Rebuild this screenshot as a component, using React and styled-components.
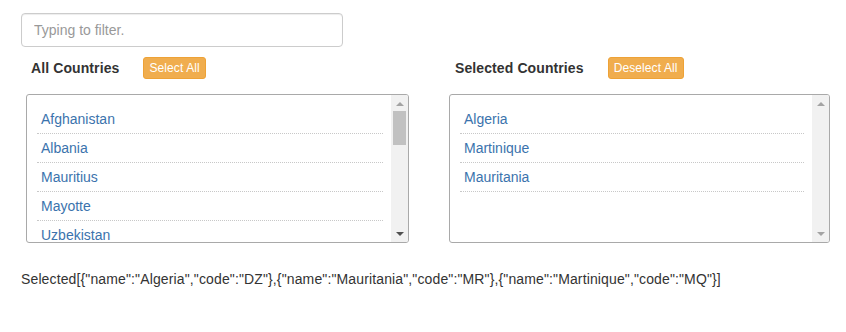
import React from "react";
import styled, { createGlobalStyle } from "styled-components";

const GlobalStyle = createGlobalStyle`
  html, body { margin: 0; padding: 0; background: #fff; }
  body {
    font-family: "Liberation Sans", Arial, Helvetica, sans-serif;
    font-size: 14px;
    line-height: 20px;
    color: #333;
  }
  * { box-sizing: border-box; }
`;

const Page = styled.div`
  padding-top: 13px;
`;

const FilterInput = styled.input`
  display: block;
  margin-left: 21px;
  width: 322px;
  height: 34px;
  padding: 6px 12px;
  font-family: inherit;
  font-size: 14px;
  line-height: 20px;
  color: #555;
  background: #fff;
  border: 1px solid #ccc;
  border-radius: 4px;
  box-shadow: inset 0 1px 1px rgba(0, 0, 0, 0.075);
  outline: none;
  &::placeholder { color: #999; }
`;

const Columns = styled.div`
  display: grid;
  grid-template-columns: 423px 423px;
  margin-top: 10px;
`;

const Column = styled.div`
  display: flex;
  flex-direction: column;
  padding-left: 26px;
`;

const Header = styled.div`
  display: flex;
  align-items: center;
  gap: 24px;
  height: 22px;
  padding-left: ${(p) => p.$indent}px;
`;

const Title = styled.span`
  font-weight: bold;
  font-size: 14px;
  line-height: 20px;
  letter-spacing: 0.1px;
  color: #333;
`;

const WarnButton = styled.button`
  font-family: inherit;
  font-size: 12px;
  line-height: 18px;
  letter-spacing: 0.1px;
  padding: 1px 5px;
  color: #fff;
  background: #f0ad4e;
  border: 1px solid #eea236;
  border-radius: 3px;
  cursor: pointer;
`;

const Box = styled.div`
  display: flex;
  margin-top: 15px;
  width: ${(p) => p.$w}px;
  height: 149px;
  border: 1px solid #a9a9a9;
  border-radius: 3px;
  overflow: hidden;
  background: #fff;
`;

const List = styled.ul`
  flex: 1;
  list-style: none;
  margin: 0;
  padding: 10px 8px 0 10px;
  overflow: hidden;
`;

const Item = styled.li`
  padding: 4px;
  line-height: 20px;
  color: #3b73ad;
  border-bottom: 1px dotted #c8c8c8;
  cursor: pointer;
`;

const Scrollbar = styled.div`
  display: flex;
  flex-direction: column;
  width: 17px;
  background: #f1f1f1;
`;

const Arrow = styled.div`
  display: flex;
  align-items: center;
  justify-content: center;
  height: 17px;
  &::before {
    content: "";
    width: 0;
    height: 0;
    border-left: 4px solid transparent;
    border-right: 4px solid transparent;
    ${(p) =>
      p.$dir === "up"
        ? `border-bottom: 4px solid ${p.$active ? "#505050" : "#a3a3a3"};`
        : `border-top: 4px solid ${p.$active ? "#505050" : "#a3a3a3"};`}
  }
`;

const Track = styled.div`
  flex: 1;
  display: flex;
  flex-direction: column;
  padding: 0 2px;
`;

const Thumb = styled.div`
  height: 34px;
  margin-top: ${(p) => p.$offset}px;
  background: #c1c1c1;
`;

const Result = styled.div`
  margin-top: 26px;
  padding-left: 21px;
  line-height: 20px;
  letter-spacing: 0.13px;
  color: #333;
`;

const allCountries = [
  "Afghanistan",
  "Albania",
  "Mauritius",
  "Mayotte",
  "Uzbekistan",
];

const selected = [
  { name: "Algeria", code: "DZ" },
  { name: "Martinique", code: "MQ" },
  { name: "Mauritania", code: "MR" },
];

const resultOrder = [
  { name: "Algeria", code: "DZ" },
  { name: "Mauritania", code: "MR" },
  { name: "Martinique", code: "MQ" },
];

function Scroll({ thumb }) {
  return (
    <Scrollbar>
      <Arrow $dir="up" />
      <Track>{thumb && <Thumb $offset={-1} />}</Track>
      <Arrow $dir="down" $active={thumb} />
    </Scrollbar>
  );
}

export default function App() {
  return (
    <Page>
      <GlobalStyle />
      <FilterInput type="text" placeholder="Typing to filter." />
      <Columns>
        <Column>
          <Header $indent={5}>
            <Title>All Countries</Title>
            <WarnButton>Select All</WarnButton>
          </Header>
          <Box $w={383}>
            <List>
              {allCountries.map((c) => (
                <Item key={c}>{c}</Item>
              ))}
            </List>
            <Scroll thumb />
          </Box>
        </Column>
        <Column>
          <Header $indent={6}>
            <Title>Selected Countries</Title>
            <WarnButton>Deselect All</WarnButton>
          </Header>
          <Box $w={381}>
            <List>
              {selected.map((c) => (
                <Item key={c.code}>{c.name}</Item>
              ))}
            </List>
            <Scroll />
          </Box>
        </Column>
      </Columns>
      <Result>Selected{JSON.stringify(resultOrder)}</Result>
    </Page>
  );
}
